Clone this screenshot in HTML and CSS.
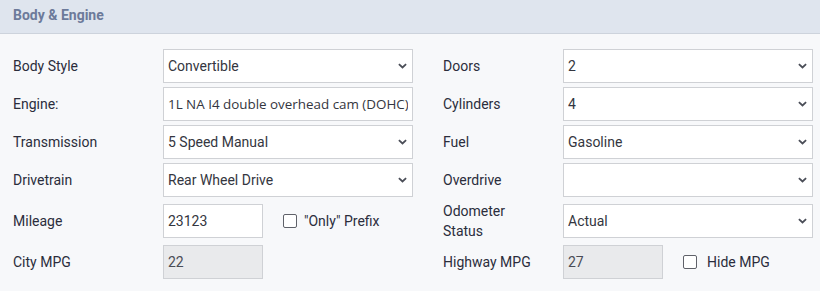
FILE: index.html
```html
<!DOCTYPE html>
<html lang="en">

<head>
    <meta charset="UTF-8">
    <meta name="viewport" content="width=device-width, initial-scale=1.0">
    <title>Body &amp; Engine</title>
    <link rel="stylesheet" href="styles.css">
</head>

<body>
    <section class="panel">
        <header class="panel__head">Body &amp; Engine</header>

        <div class="panel__body">
            <!-- row 1 -->
            <label class="field__label">Body Style</label>
            <div class="select">
                <select><option>Convertible</option></select>
                <svg class="select__arrow" viewBox="0 0 10 6"><path d="M1 1l4 3.6L9 1" /></svg>
            </div>
            <label class="field__label field__label--right">Doors</label>
            <div class="select">
                <select><option>2</option></select>
                <svg class="select__arrow" viewBox="0 0 10 6"><path d="M1 1l4 3.6L9 1" /></svg>
            </div>

            <!-- row 2 -->
            <label class="field__label">Engine:</label>
            <input class="input input--engine" type="text" value="1L NA I4 double overhead cam (DOHC) 12V">
            <label class="field__label field__label--right">Cylinders</label>
            <div class="select">
                <select><option>4</option></select>
                <svg class="select__arrow" viewBox="0 0 10 6"><path d="M1 1l4 3.6L9 1" /></svg>
            </div>

            <!-- row 3 -->
            <label class="field__label">Transmission</label>
            <div class="select">
                <select><option>5 Speed Manual</option></select>
                <svg class="select__arrow" viewBox="0 0 10 6"><path d="M1 1l4 3.6L9 1" /></svg>
            </div>
            <label class="field__label field__label--right">Fuel</label>
            <div class="select">
                <select><option>Gasoline</option></select>
                <svg class="select__arrow" viewBox="0 0 10 6"><path d="M1 1l4 3.6L9 1" /></svg>
            </div>

            <!-- row 4 -->
            <label class="field__label">Drivetrain</label>
            <div class="select">
                <select><option>Rear Wheel Drive</option></select>
                <svg class="select__arrow" viewBox="0 0 10 6"><path d="M1 1l4 3.6L9 1" /></svg>
            </div>
            <label class="field__label field__label--right">Overdrive</label>
            <div class="select">
                <select><option></option></select>
                <svg class="select__arrow" viewBox="0 0 10 6"><path d="M1 1l4 3.6L9 1" /></svg>
            </div>

            <!-- row 5 -->
            <label class="field__label">Mileage</label>
            <div class="inline">
                <input class="input input--short" type="text" value="23123">
                <label class="check"><input type="checkbox"> "Only" Prefix</label>
            </div>
            <label class="field__label field__label--right">Odometer Status</label>
            <div class="select">
                <select><option>Actual</option></select>
                <svg class="select__arrow" viewBox="0 0 10 6"><path d="M1 1l4 3.6L9 1" /></svg>
            </div>

            <!-- row 6 -->
            <label class="field__label">City MPG</label>
            <div class="inline">
                <input class="input input--short" type="text" value="22" disabled>
            </div>
            <label class="field__label field__label--right">Highway MPG</label>
            <div class="inline">
                <input class="input input--short" type="text" value="27" disabled>
                <label class="check check--wide"><input type="checkbox"> Hide MPG</label>
            </div>
        </div>
    </section>
</body>

</html>
```

FILE: styles.css
```css
* {
    margin: 0;
    padding: 0;
    box-sizing: border-box;
}

body {
    width: 820px;
    height: 291px;
    overflow: hidden;
    background-color: #f7f8fa;
    font-family: Roboto, "Liberation Sans", sans-serif;
    font-size: 14px;
    color: #2b2d3c;
}

/* panel */
.panel__head {
    height: 34px;
    padding: 6px 13px 0;
    background-color: #dfe5ee;
    border-bottom: 1px solid #cdd3dc;
    font-size: 14px;
    font-weight: 700;
    line-height: 18px;
    color: #6c7a9a;
}

.panel__body {
    display: grid;
    grid-template-columns: 150px 250px 150px 250px;
    row-gap: 4px;
    padding: 15px 0 12px 13px;
    align-items: center;
}

.field__label {
    line-height: 20px;
    color: #2b2d3c;
}

.field__label--right {
    padding: 0 30px 0 30px;
}

/* controls */
.select {
    position: relative;
    height: 34px;
}

.select select {
    appearance: none;
    -webkit-appearance: none;
    width: 100%;
    height: 34px;
    padding: 0 24px 0 4px;
    border: 1px solid #cfd1d5;
    border-radius: 0;
    background-color: #fff;
    font-family: Roboto, "Liberation Sans", sans-serif;
    font-size: 14px;
    color: #343640;
    outline: none;
}

.select__arrow {
    /* sits over the select */
    position: absolute;
    right: 6px;
    top: 14px;
    width: 9px;
    height: 6px;
    fill: none;
    stroke: #4a4d57;
    stroke-width: 2;
    pointer-events: none;
}

.input {
    height: 34px;
    padding: 0 4px;
    border: 1px solid #cfd1d5;
    border-radius: 0;
    background-color: #fff;
    font-family: Roboto, "Liberation Sans", sans-serif;
    font-size: 14px;
    color: #343640;
    outline: none;
}

.input--engine {
    width: 250px;
    font-family: "Open Sans", "Liberation Sans", sans-serif;
    font-size: 13.4px;
}

.input--short {
    width: 100px;
}

.input:disabled {
    background-color: #e9eaec;
    color: #4a4c55;
}

.inline {
    display: flex;
    align-items: center;
}

.check {
    display: flex;
    align-items: center;
    gap: 7px;
    margin-left: 20px;
    color: #2b2d3c;
}

.check--wide {
    gap: 10px;
}

.check input {
    appearance: none;
    -webkit-appearance: none;
    width: 14px;
    height: 14px;
    border: 1px solid #5f6169;
    border-radius: 2px;
    background-color: #fff;
}
```
